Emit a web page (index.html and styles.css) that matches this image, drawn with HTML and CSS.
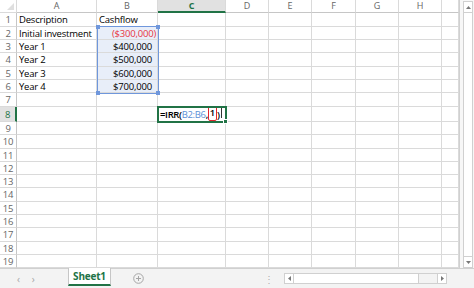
FILE: index.html
```html
<!DOCTYPE html>
<html lang="en">
<head>
  <meta charset="UTF-8" />
  <title>IRR - Excel</title>
  <link rel="stylesheet" href="styles.css">
</head>
<body>

  <div class="book">
    <div class="main">
      <div class="sheet">
        <div class="corner"><span class="tri"></span></div><div class="ch">A</div><div class="ch">B</div><div class="ch sel">C</div><div class="ch">D</div><div class="ch">E</div><div class="ch">F</div><div class="ch">G</div><div class="ch">H</div><div class="ch"></div>
        <div class="rh">1</div><div class="c">Description</div><div class="c">Cashflow</div><div class="c"></div><div class="c"></div><div class="c"></div><div class="c"></div><div class="c"></div><div class="c"></div><div class="c"></div>
        <div class="rh">2</div><div class="c">Initial investment</div><div class="c num neg">($300,000)</div><div class="c"></div><div class="c"></div><div class="c"></div><div class="c"></div><div class="c"></div><div class="c"></div><div class="c"></div>
        <div class="rh">3</div><div class="c">Year 1</div><div class="c num">$400,000</div><div class="c"></div><div class="c"></div><div class="c"></div><div class="c"></div><div class="c"></div><div class="c"></div><div class="c"></div>
        <div class="rh">4</div><div class="c">Year 2</div><div class="c num">$500,000</div><div class="c"></div><div class="c"></div><div class="c"></div><div class="c"></div><div class="c"></div><div class="c"></div><div class="c"></div>
        <div class="rh">5</div><div class="c">Year 3</div><div class="c num">$600,000</div><div class="c"></div><div class="c"></div><div class="c"></div><div class="c"></div><div class="c"></div><div class="c"></div><div class="c"></div>
        <div class="rh">6</div><div class="c">Year 4</div><div class="c num">$700,000</div><div class="c"></div><div class="c"></div><div class="c"></div><div class="c"></div><div class="c"></div><div class="c"></div><div class="c"></div>
        <div class="rh">7</div><div class="c"></div><div class="c"></div><div class="c"></div><div class="c"></div><div class="c"></div><div class="c"></div><div class="c"></div><div class="c"></div><div class="c"></div>
        <div class="rh sel">8</div><div class="c"></div><div class="c"></div><div class="c active">=IRR(<span class="ref">B2:B6</span>,<span class="hl">1</span>)<span class="caret"></span><span class="fill"></span></div><div class="c"></div><div class="c"></div><div class="c"></div><div class="c"></div><div class="c"></div><div class="c"></div>
        <div class="rh">9</div><div class="c"></div><div class="c"></div><div class="c"></div><div class="c"></div><div class="c"></div><div class="c"></div><div class="c"></div><div class="c"></div><div class="c"></div>
        <div class="rh">10</div><div class="c"></div><div class="c"></div><div class="c"></div><div class="c"></div><div class="c"></div><div class="c"></div><div class="c"></div><div class="c"></div><div class="c"></div>
        <div class="rh">11</div><div class="c"></div><div class="c"></div><div class="c"></div><div class="c"></div><div class="c"></div><div class="c"></div><div class="c"></div><div class="c"></div><div class="c"></div>
        <div class="rh">12</div><div class="c"></div><div class="c"></div><div class="c"></div><div class="c"></div><div class="c"></div><div class="c"></div><div class="c"></div><div class="c"></div><div class="c"></div>
        <div class="rh">13</div><div class="c"></div><div class="c"></div><div class="c"></div><div class="c"></div><div class="c"></div><div class="c"></div><div class="c"></div><div class="c"></div><div class="c"></div>
        <div class="rh">14</div><div class="c"></div><div class="c"></div><div class="c"></div><div class="c"></div><div class="c"></div><div class="c"></div><div class="c"></div><div class="c"></div><div class="c"></div>
        <div class="rh">15</div><div class="c"></div><div class="c"></div><div class="c"></div><div class="c"></div><div class="c"></div><div class="c"></div><div class="c"></div><div class="c"></div><div class="c"></div>
        <div class="rh">16</div><div class="c"></div><div class="c"></div><div class="c"></div><div class="c"></div><div class="c"></div><div class="c"></div><div class="c"></div><div class="c"></div><div class="c"></div>
        <div class="rh">17</div><div class="c"></div><div class="c"></div><div class="c"></div><div class="c"></div><div class="c"></div><div class="c"></div><div class="c"></div><div class="c"></div><div class="c"></div>
        <div class="rh">18</div><div class="c"></div><div class="c"></div><div class="c"></div><div class="c"></div><div class="c"></div><div class="c"></div><div class="c"></div><div class="c"></div><div class="c"></div>
        <div class="rh">19</div><div class="c"></div><div class="c"></div><div class="c"></div><div class="c"></div><div class="c"></div><div class="c"></div><div class="c"></div><div class="c"></div><div class="c"></div>

        <!-- B2:B6 reference highlight -->
        <div class="range">
          <span class="dot tl"></span><span class="dot tr"></span><span class="dot bl"></span><span class="dot br"></span>
        </div>
      </div>

      <div class="vscroll">
        <div class="arrow up"><svg width="5" height="3" viewBox="0 0 5 3"><path d="M0 3 L2.5 0 L5 3Z" fill="#777"/></svg></div>
        <div class="thumb"></div>
        <div class="arrow down"><svg width="5" height="3" viewBox="0 0 5 3"><path d="M0 0 L2.5 3 L5 0Z" fill="#777"/></svg></div>
      </div>
    </div>

    <div class="tabs">
      <div class="nav">
        <span>&lsaquo;</span><span>&rsaquo;</span>
      </div>
      <div class="tab">Sheet1</div>
      <div class="add">
        <svg width="11" height="11" viewBox="0 0 11 11"><circle cx="5.5" cy="5.5" r="4.8" fill="none" stroke="#a6a6a6" stroke-width="1"/><path d="M5.5 3v5M3 5.5h5" stroke="#a6a6a6" stroke-width="1"/></svg>
      </div>
      <div class="split">&#8942;</div>
      <div class="hscroll">
        <div class="harrow"><svg width="3" height="5" viewBox="0 0 3 5"><path d="M3 0 L0 2.5 L3 5Z" fill="#777"/></svg></div>
        <div class="hthumb"></div>
        <div class="harrow right"><svg width="3" height="5" viewBox="0 0 3 5"><path d="M0 0 L3 2.5 L0 5Z" fill="#777"/></svg></div>
      </div>
    </div>
  </div>

</body>
</html>
```

FILE: styles.css
```css
:root {
  --grid: #dadada;
  --head-text: #666666;
  --green: #217346;
  --range: #6f97dc;
  --range-fill: #e8eef9;
}

* {
  box-sizing: border-box;
  margin: 0;
  padding: 0;
}

body {
  width: 474px;
  height: 288px;
  overflow: hidden;
  background: #ffffff;
  font-family: 'Open Sans', 'Liberation Sans', sans-serif;
  font-size: 9.5px;
  letter-spacing: -0.2px;
  color: #000;
}

.book {
  display: flex;
  flex-direction: column;
  height: 288px;
}

.main {
  display: flex;
  height: 268px;
}

.sheet {
  position: relative;
  display: grid;
  grid-template-columns: 17px 80px 61px 68px 43px 43px 44px 43px 43px 17px;
  grid-template-rows: 13px 14px 13px 13px 14px 13px 13px 14px 15px 13px 14px 13px 13px 13px 14px 13px 13px 14px 13px 13px;
  width: 459px;
}

.sheet > div {
  border-right: 1px solid var(--grid);
  border-bottom: 1px solid var(--grid);
  white-space: nowrap;
  overflow: hidden;
}

.corner {
  position: relative;
  background: #fff;
}

.corner .tri {
  position: absolute;
  right: 2px;
  bottom: 2px;
  width: 0;
  height: 0;
  border-left: 7px solid transparent;
  border-bottom: 7px solid #dfdfdf;
}

.ch {
  text-align: center;
  color: var(--head-text);
  line-height: 12px;
  font-size: 9px;
  letter-spacing: 0;
  border-bottom-color: #c6c6c6 !important;
}

.ch.sel {
  background: #e1e1e1;
  color: var(--green);
  font-weight: 700;
  border-bottom: 2px solid var(--green) !important;
}

.rh {
  text-align: center;
  color: var(--head-text);
  font-size: 9.5px;
  display: flex;
  align-items: center;
  justify-content: center;
  border-right-color: #c6c6c6 !important;
}

.rh.sel {
  background: #e1e1e1;
  color: var(--green);
  border-right: 2px solid var(--green) !important;
}

.c {
  padding: 0 2px;
  display: flex;
  align-items: center;
}

.c.num {
  justify-content: flex-end;
  padding-right: 5px;
  background: var(--range-fill);
}

.c.neg {
  color: #e8353f;
  padding-right: 1px;
}

.c.active {
  position: relative;
  overflow: visible !important;
  outline: 2px solid var(--green);
  outline-offset: -1px;
  z-index: 2;
  font-weight: 600;
  letter-spacing: -0.35px;
}

.ref {
  color: #5b8fd6;
  font-weight: 400;
}

.hl {
  display: inline-block;
  height: 15px;
  line-height: 12px;
  padding: 0 1px;
  border: 1.5px solid #e0262e;
  border-radius: 2px;
  margin-top: -1px;
}

.caret {
  display: inline-block;
  width: 1px;
  height: 12px;
  background: #333;
  margin-left: 1px;
  margin-top: -4px;
}

.fill {
  position: absolute;
  right: -3px;
  bottom: -3px;
  width: 5px;
  height: 5px;
  background: var(--green);
  border: 1px solid #fff;
}

.range {
  position: absolute;
  left: 97px;
  top: 26px;
  width: 62px;
  height: 68px;
  border: 1px solid var(--range) !important;
  pointer-events: none;
  overflow: visible !important;
}

.dot {
  position: absolute;
  width: 4px;
  height: 4px;
  background: var(--range);
}

.dot.tl { left: -2px; top: -2px; }
.dot.tr { right: -2px; top: -2px; }
.dot.bl { left: -2px; bottom: -2px; }
.dot.br { right: -2px; bottom: -2px; }

.vscroll {
  width: 15px;
  display: flex;
  flex-direction: column;
  padding: 1px 1px 0 3px;
  background: #f7f7f7;
  border-left: 1px solid #d0d0d0;
}

.arrow {
  height: 12px;
  background: #fff;
  border: 1px solid #d0d0d0;
  display: flex;
  align-items: center;
  justify-content: center;
}

.vscroll .thumb {
  flex: 1;
  background: #fff;
  border: 1px solid #d0d0d0;
  border-top: none;
  border-bottom: none;
}

.tabs {
  display: flex;
  align-items: stretch;
  height: 20px;
  background: #f3f3f3;
  border-top: 1px solid #d0d0d0;
}

.nav {
  width: 68px;
  display: flex;
  gap: 12px;
  padding-left: 17px;
  align-items: center;
  color: #a6a6a6;
  font-size: 10px;
}

.tab {
  width: 43px;
  background: #fff;
  color: var(--green);
  font-weight: 700;
  font-size: 10px;
  text-align: center;
  line-height: 16px;
  border-left: 1px solid #c6c6c6;
  border-right: 1px solid #c6c6c6;
  border-bottom: 2px solid var(--green);
  margin-top: -1px;
  margin-bottom: 2px;
}

.add {
  width: 46px;
  display: flex;
  align-items: center;
  padding-left: 22px;
}

.split {
  width: 127px;
  display: flex;
  align-items: center;
  justify-content: flex-end;
  padding-right: 10px;
  color: #b0b0b0;
  font-size: 10px;
}

.hscroll {
  width: 163px;
  height: 11px;
  margin-top: 4px;
  display: flex;
  border: 1px solid #d0d0d0;
  background: #f3f3f3;
}

.harrow {
  width: 9px;
  background: #fff;
  display: flex;
  align-items: center;
  justify-content: center;
  border-right: 1px solid #d0d0d0;
}

.harrow.right {
  margin-left: auto;
  border-right: none;
  border-left: 1px solid #d0d0d0;
}

.hthumb {
  width: 125px;
  background: #fff;
  border-right: 1px solid #d0d0d0;
}
```
